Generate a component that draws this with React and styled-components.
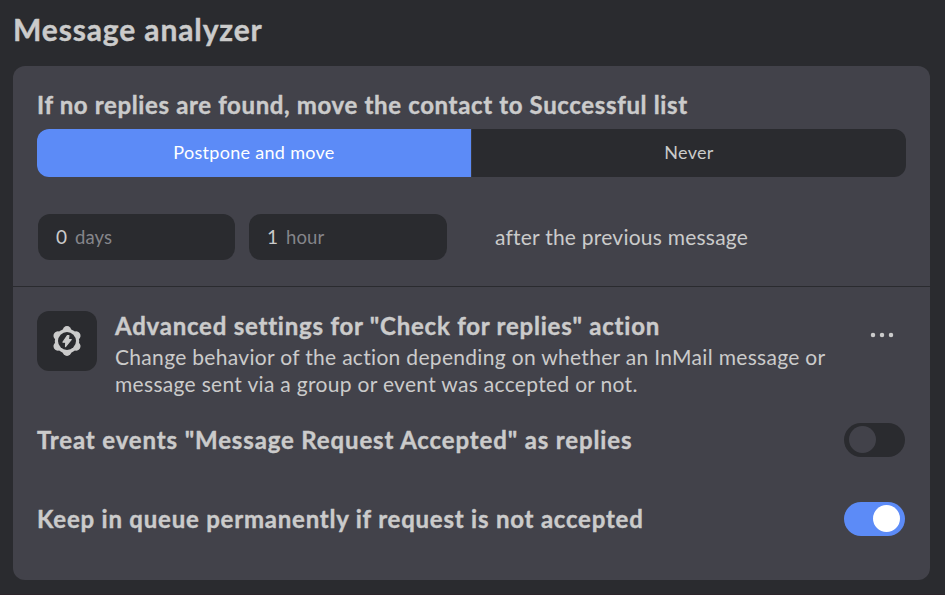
import React, { useState } from "react";
import styled, { createGlobalStyle } from "styled-components";

const GlobalStyle = createGlobalStyle`
  * {
    box-sizing: border-box;
  }
  body {
    margin: 0;
    background: #2a2b2f;
    color: #cbcbcb;
    font-family: "Avenir Next", Avenir, Lato, sans-serif;
  }
  button {
    font-family: inherit;
    border: 0;
    padding: 0;
    cursor: pointer;
  }
`;

const Page = styled.main`
  width: 945px;
  height: 595px;
  padding: 0 15px 14px 13px;
  border-bottom: 1px solid #2c252b;
  overflow: hidden;
`;

const PageTitle = styled.h1`
  height: 66px;
  margin: 0;
  font-size: 30px;
  line-height: 58px;
  letter-spacing: 0.87px;
  white-space: nowrap;
  -webkit-text-stroke: 0.4px currentColor;
`;

const Card = styled.section`
  height: 514px;
  border-radius: 12px;
  background: #42424a;
`;

const Block = styled.div`
  padding: 24px 24px 0;
`;

const DelayBlock = styled(Block)`
  height: 221px;
  border-bottom: 1px solid #2a2b2f;
`;

const Heading = styled.h2`
  height: 30px;
  margin: 0;
  font-size: 24px;
  line-height: 29px;
  letter-spacing: ${(props) => props.$spacing};
  white-space: nowrap;
  -webkit-text-stroke: 0.4px currentColor;
`;

const Segments = styled.div`
  display: flex;
  height: 48px;
  margin-top: 9px;
  border-radius: 12px;
  background: #2a2b2f;
  overflow: hidden;
`;

const Segment = styled.button`
  flex: 1;
  padding-bottom: 2px;
  font-size: 18px;
  letter-spacing: 0.3px;
  color: ${(props) => (props.$active ? "#ffffff" : "#cbcbcb")};
  background: ${(props) => (props.$active ? "#5c8bf7" : "transparent")};

  & + & {
    border-left: 1px solid #38393f;
  }
`;

const DelayRow = styled.div`
  display: flex;
  align-items: center;
  gap: 14px;
  margin: 37px 0 0 1px;
`;

const DelayField = styled.div`
  display: flex;
  align-items: center;
  gap: 8px;
  width: ${(props) => props.$width};
  height: 46px;
  padding: 0 0 1px 18px;
  border-radius: 12px;
  background: #2a2b2f;
  font-size: 19px;
`;

const Unit = styled.span`
  font-size: 18.5px;
  letter-spacing: 0.1px;
  color: #85858a;
`;

const DelayNote = styled.span`
  margin-left: 34px;
  padding-bottom: 2px;
  font-size: 21px;
  letter-spacing: 0.23px;
  white-space: nowrap;
`;

const Action = styled.div`
  display: flex;
`;

const ActionIcon = styled.div`
  display: flex;
  align-items: center;
  justify-content: center;
  width: 60px;
  height: 60px;
  border-radius: 12px;
  background: #2a2b2f;
`;

const ActionText = styled.div`
  flex: 1;
  margin-left: 18px;
`;

const Description = styled.p`
  margin: 2px 0 0;
  font-size: 21px;
  line-height: 27px;
  letter-spacing: 0.31px;
  white-space: nowrap;
`;

const MenuButton = styled.button`
  display: flex;
  align-items: center;
  justify-content: center;
  width: 48px;
  height: 48px;
  background: none;
  color: #cbcbcb;
`;

const Option = styled.div`
  display: flex;
  align-items: center;
  justify-content: space-between;
  height: 34px;
  margin: ${(props) => props.$top} 1px 0 0;
`;

const Toggle = styled.button`
  display: flex;
  justify-content: ${(props) => (props.$on ? "flex-end" : "flex-start")};
  width: 61px;
  height: 34px;
  padding: 3px 5px;
  border-radius: 17px;
  background: ${(props) => (props.$on ? "#5c8bf7" : "#2a2b2f")};
`;

const Knob = styled.span`
  width: 27px;
  height: 27px;
  border-radius: 50%;
  background: ${(props) => (props.$on ? "#ffffff" : "#42424a")};
`;

const GearBolt = () => (
  <svg width="30" height="30" viewBox="-15 -15 30 30" fill="#cbcbcb">
    <circle r="12.2" />
    {[0, 60, 120, 180, 240, 300].map((angle) => (
      <circle
        key={angle}
        cy="-10.5"
        r="4.4"
        transform={`rotate(${angle})`}
      />
    ))}
    <circle r="9" fill="#2a2b2f" />
    <path
      stroke="#cbcbcb"
      strokeWidth="1.2"
      strokeLinejoin="round"
      d="M0.4 -5.4L-4 1.2H-1.2L-1.5 5.6L4.2 -1.5H1.4L1.9 -5.4Z"
    />
  </svg>
);

const Dots = () => (
  <svg width="24" height="6" viewBox="0 0 24 6" fill="currentColor">
    <circle cx="3" cy="3" r="2.25" />
    <circle cx="12" cy="3" r="2.25" />
    <circle cx="21" cy="3" r="2.25" />
  </svg>
);

const App = () => {
  const [mode, setMode] = useState("postpone");
  const [treatAsReplies, setTreatAsReplies] = useState(false);
  const [keepInQueue, setKeepInQueue] = useState(true);

  return (
    <>
      <GlobalStyle />
      <Page>
        <PageTitle>Message analyzer</PageTitle>
        <Card>
          <DelayBlock>
            <Heading $spacing="0.64px">
              If no replies are found, move the contact to Successful list
            </Heading>
            <Segments>
              <Segment
                $active={mode === "postpone"}
                onClick={() => setMode("postpone")}
              >
                Postpone and move
              </Segment>
              <Segment
                $active={mode === "never"}
                onClick={() => setMode("never")}
              >
                Never
              </Segment>
            </Segments>
            <DelayRow>
              <DelayField $width="197px">
                0 <Unit>days</Unit>
              </DelayField>
              <DelayField $width="198px">
                1 <Unit>hour</Unit>
              </DelayField>
              <DelayNote>after the previous message</DelayNote>
            </DelayRow>
          </DelayBlock>
          <Block>
            <Action>
              <ActionIcon>
                <GearBolt />
              </ActionIcon>
              <ActionText>
                <Heading $spacing="0.77px">
                  Advanced settings for "Check for replies" action
                </Heading>
                <Description>
                  Change behavior of the action depending on whether an InMail
                  message or
                  <br />
                  message sent via a group or event was accepted or not.
                </Description>
              </ActionText>
              <MenuButton aria-label="More">
                <Dots />
              </MenuButton>
            </Action>
            <Option $top="26px">
              <Heading $spacing="0.86px">
                Treat events "Message Request Accepted" as replies
              </Heading>
              <Toggle
                $on={treatAsReplies}
                onClick={() => setTreatAsReplies(!treatAsReplies)}
              >
                <Knob $on={treatAsReplies} />
              </Toggle>
            </Option>
            <Option $top="45px">
              <Heading $spacing="0.78px">
                Keep in queue permanently if request is not accepted
              </Heading>
              <Toggle
                $on={keepInQueue}
                onClick={() => setKeepInQueue(!keepInQueue)}
              >
                <Knob $on={keepInQueue} />
              </Toggle>
            </Option>
          </Block>
        </Card>
      </Page>
    </>
  );
};

export default App;
